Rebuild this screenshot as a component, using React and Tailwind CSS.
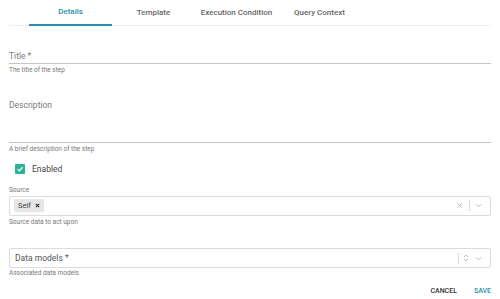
import React from 'react';

const tabs = ['Details', 'Template', 'Execution Condition', 'Query Context'];

const Chevron = () => (
  <svg width="9" height="9" viewBox="0 0 10 10" fill="none" stroke="#b3b3b3" strokeWidth="1">
    <path d="M2 3.5 L5 6.5 L8 3.5" />
  </svg>
);

const App = () => {
  return (
    <div className="w-[500px] h-[299px] bg-white px-[9px] font-['Roboto',sans-serif] text-[#333] overflow-hidden">
      {/* tabs */}
      <div className="flex pl-[20px] h-[26px] border-b border-[#eeeeee]">
        {tabs.map((t, i) => (
          <div
            key={t}
            className={
              i === 0
                ? 'w-[83px] flex items-center justify-center text-[8px] font-medium text-[#2a8fa8] border-b-2 border-[#2a8fa8] -mb-px'
                : 'w-[83px] flex items-center justify-center text-[8px] font-medium text-[#666]'
            }
          >
            {t}
          </div>
        ))}
      </div>

      {/* title */}
      <div className="mt-[23px] border-b border-[#c4c4c4] h-[15px] flex items-end pb-[3px]">
        <span className="text-[8.5px] text-[#7a7a7a] leading-none">Title *</span>
      </div>
      <div className="text-[6.5px] text-[#777] mt-[3px] leading-none">The title of the step</div>

      {/* description */}
      <div className="mt-[27px] border-b border-[#c4c4c4] h-[42px]">
        <div className="text-[8.5px] text-[#7a7a7a] leading-none">Description</div>
      </div>
      <div className="text-[6.5px] text-[#777] mt-[3px] leading-none">A brief description of the step</div>

      {/* enabled */}
      <div className="flex items-center mt-[12px] ml-[6px] gap-[7px] h-[10px]">
        <div className="w-[10px] h-[10px] rounded-[1px] bg-[#2bb39a] flex items-center justify-center">
          <svg width="8" height="8" viewBox="0 0 10 10" fill="none" stroke="white" strokeWidth="1.6">
            <path d="M2 5.2 L4.2 7.3 L8.2 2.8" />
          </svg>
        </div>
        <span className="text-[8.5px] text-[#444] leading-none">Enabled</span>
      </div>

      {/* source */}
      <div className="text-[6.5px] text-[#777] mt-[13px] leading-none">Source</div>
      <div className="mt-[2px] h-[20px] border border-[#dcdcdc] rounded-[2px] flex items-center pl-[4px] pr-[4px]">
        <div className="flex items-center gap-[4px] bg-[#e6e6e6] rounded-[2px] h-[13px] px-[4px]">
          <span className="text-[7.5px] text-[#444] leading-none">Self</span>
          <svg width="5" height="5" viewBox="0 0 6 6" stroke="#333" strokeWidth="1.3">
            <path d="M1 1 L5 5 M5 1 L1 5" />
          </svg>
        </div>
        <div className="flex-1" />
        <svg width="7" height="7" viewBox="0 0 8 8" stroke="#b3b3b3" strokeWidth="1" className="mr-[6px]">
          <path d="M1.5 1.5 L6.5 6.5 M6.5 1.5 L1.5 6.5" />
        </svg>
        <div className="w-px h-[11px] bg-[#dcdcdc]" />
        <div className="w-[16px] flex justify-center">
          <Chevron />
        </div>
      </div>
      <div className="text-[6.5px] text-[#777] mt-[3px] leading-none">Source data to act upon</div>

      {/* data models */}
      <div className="mt-[23px] h-[20px] border border-[#dcdcdc] rounded-[2px] flex items-center pl-[5px] pr-[4px]">
        <span className="text-[8.5px] text-[#555] leading-none">Data models *</span>
        <div className="flex-1" />
        <div className="w-px h-[11px] bg-[#dcdcdc]" />
        <svg width="8" height="10" viewBox="0 0 8 10" fill="none" stroke="#b3b3b3" strokeWidth="0.9" className="ml-[3px]">
          <path d="M2 4 L4 2 L6 4" />
          <path d="M2 6 L4 8 L6 6" />
        </svg>
        <div className="w-[16px] flex justify-center">
          <Chevron />
        </div>
      </div>
      <div className="text-[6.5px] text-[#777] mt-[2px] leading-none">Associated data models</div>

      {/* actions */}
      <div className="flex justify-end gap-[17px] mt-[11px]">
        <span className="text-[7px] font-medium text-[#333] leading-none">CANCEL</span>
        <span className="text-[7px] font-medium text-[#2a8fa8] leading-none">SAVE</span>
      </div>
    </div>
  );
};

export default App;
